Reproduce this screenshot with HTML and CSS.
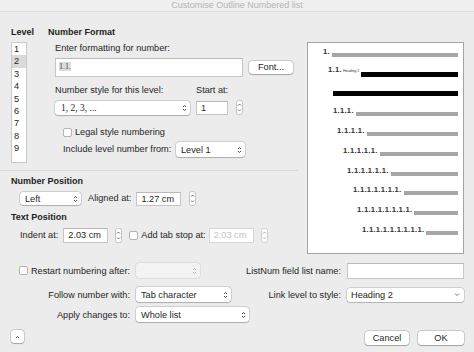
FILE: index.html
```html
<!DOCTYPE html>
<html lang="en">
<head>
    <meta charset="UTF-8">
    <meta name="viewport" content="width=device-width, initial-scale=1.0">
    <title>Customise Outline Numbered list</title>
    <link rel="stylesheet" href="styles.css">
</head>
<body>
    <div class="titlebar">Customise Outline Numbered list</div>

    <div class="top">
        <div class="setup">
            <div class="format-area">
                <div class="levels">
                    <div class="section-title">Level</div>
                    <div class="level-list">
                        <div class="level">1</div>
                        <div class="level selected">2</div>
                        <div class="level">3</div>
                        <div class="level">4</div>
                        <div class="level">5</div>
                        <div class="level">6</div>
                        <div class="level">7</div>
                        <div class="level">8</div>
                        <div class="level">9</div>
                    </div>
                </div>

                <div class="format">
                    <div class="section-title">Number Format</div>
                    <div class="indent">
                        <div class="label first">Enter formatting for number:</div>
                        <div class="row field-row">
                            <div class="field format-field"><span class="code">1.1.</span></div>
                            <div class="button font-btn">Font...</div>
                        </div>
                        <div class="row label-row">
                            <div class="label style-label">Number style for this level:</div>
                            <div class="label">Start at:</div>
                        </div>
                        <div class="row control-row">
                            <div class="popup style-popup"><span class="serif">1, 2, 3, ...</span>
                                <svg class="chev" width="5" height="8" viewBox="0 0 5 8"><path d="M1 3 2.5 1.5 4 3M1 5 2.5 6.5 4 5" fill="none" stroke="#333" stroke-width="0.9"/></svg>
                            </div>
                            <div class="field start-field">1</div>
                            <svg class="stepper" width="7" height="15" viewBox="0 0 7 15"><rect x="0.5" y="0.5" width="6" height="14" rx="2" fill="#fff" stroke="#c4c4c4"/><path d="M2 5.5 3.5 4 5 5.5M2 9.5 3.5 11 5 9.5" fill="none" stroke="#555" stroke-width="0.8"/></svg>
                        </div>
                        <div class="row check-row"><span class="checkbox"></span>Legal style numbering</div>
                        <div class="row include-row">
                            <div class="label include-label">Include level number from:</div>
                            <div class="popup include-popup">Level 1
                                <svg class="chev" width="5" height="8" viewBox="0 0 5 8"><path d="M1 3 2.5 1.5 4 3M1 5 2.5 6.5 4 5" fill="none" stroke="#333" stroke-width="0.9"/></svg>
                            </div>
                        </div>
                    </div>
                </div>
            </div>

            <div class="positions">
                <div class="section-title">Number Position</div>
                <div class="row pos-row">
                    <div class="popup align-popup">Left
                        <svg class="chev" width="5" height="8" viewBox="0 0 5 8"><path d="M1 3 2.5 1.5 4 3M1 5 2.5 6.5 4 5" fill="none" stroke="#333" stroke-width="0.9"/></svg>
                    </div>
                    <div class="label aligned-label">Aligned at:</div>
                    <div class="field cm-field">1.27 cm</div>
                    <svg class="stepper" width="7" height="15" viewBox="0 0 7 15"><rect x="0.5" y="0.5" width="6" height="14" rx="2" fill="#fff" stroke="#c4c4c4"/><path d="M2 5.5 3.5 4 5 5.5M2 9.5 3.5 11 5 9.5" fill="none" stroke="#555" stroke-width="0.8"/></svg>
                </div>

                <div class="section-title text-title">Text Position</div>
                <div class="row pos-row indent-row">
                    <div class="label">Indent at:</div>
                    <div class="field cm-field indent-field">2.03 cm</div>
                    <svg class="stepper" width="7" height="15" viewBox="0 0 7 15"><rect x="0.5" y="0.5" width="6" height="14" rx="2" fill="#fff" stroke="#c4c4c4"/><path d="M2 5.5 3.5 4 5 5.5M2 9.5 3.5 11 5 9.5" fill="none" stroke="#555" stroke-width="0.8"/></svg>
                    <span class="checkbox tab-check"></span>
                    <div class="label">Add tab stop at:</div>
                    <div class="field cm-field tab-field disabled">2.03 cm</div>
                    <svg class="stepper" width="7" height="15" viewBox="0 0 7 15"><rect x="0.5" y="0.5" width="6" height="14" rx="2" fill="#fff" stroke="#d0d0d0"/><path d="M2 5.5 3.5 4 5 5.5M2 9.5 3.5 11 5 9.5" fill="none" stroke="#999" stroke-width="0.8"/></svg>
                </div>
            </div>
        </div>

        <div class="preview">
            <div class="pv-row lv1"><span class="num">1.</span><span class="bar"></span></div>
            <div class="pv-row lv2"><span class="num">1.1.<span class="tiny">Heading 2</span></span><span class="bar dark"></span></div>
            <div class="pv-row lv3"><span class="bar dark"></span></div>
            <div class="pv-row lv4"><span class="num">1.1.1.</span><span class="bar"></span></div>
            <div class="pv-row lv5"><span class="num">1.1.1.1.</span><span class="bar"></span></div>
            <div class="pv-row lv6"><span class="num">1.1.1.1.1.</span><span class="bar"></span></div>
            <div class="pv-row lv7"><span class="num">1.1.1.1.1.1.</span><span class="bar"></span></div>
            <div class="pv-row lv8"><span class="num">1.1.1.1.1.1.1.</span><span class="bar"></span></div>
            <div class="pv-row lv9"><span class="num">1.1.1.1.1.1.1.1.</span><span class="bar"></span></div>
            <div class="pv-row lv10"><span class="num">1.1.1.1.1.1.1.1.1.</span><span class="bar"></span></div>
        </div>
    </div>

    <div class="options">
        <div class="opt-cell opt-label"><span class="checkbox"></span>Restart numbering after:</div>
        <div class="opt-cell">
            <div class="popup restart-popup disabled">
                <svg class="chev" width="5" height="8" viewBox="0 0 5 8"><path d="M1 3 2.5 1.5 4 3M1 5 2.5 6.5 4 5" fill="none" stroke="#aaa" stroke-width="0.9"/></svg>
            </div>
        </div>
        <div class="opt-cell opt-label">ListNum field list name:</div>
        <div class="opt-cell"><div class="field listnum-field"></div></div>

        <div class="opt-cell opt-label">Follow number with:</div>
        <div class="opt-cell">
            <div class="popup follow-popup">Tab character
                <svg class="chev" width="5" height="8" viewBox="0 0 5 8"><path d="M1 3 2.5 1.5 4 3M1 5 2.5 6.5 4 5" fill="none" stroke="#333" stroke-width="0.9"/></svg>
            </div>
        </div>
        <div class="opt-cell opt-label">Link level to style:</div>
        <div class="opt-cell">
            <div class="combo">Heading 2
                <svg class="chev" width="6" height="5" viewBox="0 0 6 5"><path d="M1 1.5 3 3.5 5 1.5" fill="none" stroke="#666" stroke-width="0.9"/></svg>
            </div>
        </div>

        <div class="opt-cell opt-label">Apply changes to:</div>
        <div class="opt-cell">
            <div class="popup apply-popup">Whole list
                <svg class="chev" width="5" height="8" viewBox="0 0 5 8"><path d="M1 3 2.5 1.5 4 3M1 5 2.5 6.5 4 5" fill="none" stroke="#333" stroke-width="0.9"/></svg>
            </div>
        </div>
    </div>

    <div class="footer">
        <div class="button disclose">
            <svg width="5" height="4" viewBox="0 0 5 4"><path d="M1 3 2.5 1.5 4 3" fill="none" stroke="#444" stroke-width="0.9"/></svg>
        </div>
        <div class="button cancel">Cancel</div>
        <div class="button ok">OK</div>
    </div>
</body>
</html>
```

FILE: styles.css
```css
body {
    margin: 0;
    width: 474px;
    height: 352px;
    overflow: hidden;
    background-color: #ececec;
    font-family: "Liberation Sans", Arial, sans-serif;
    font-size: 9.2px;
    color: #262626;
}

.titlebar {
    height: 11px;
    line-height: 10px;
    text-align: center;
    font-size: 9px;
    color: #b4b4b4;
    background-color: #f0f0f0;
    border-bottom: 1px solid #dedede;
}

.top {
    display: flex;
}

.setup {
    width: 298px;
}

.format-area {
    display: flex;
    height: 158px;
    padding-left: 11px;
    border-bottom: 1px solid #d9d9d9;
}

.section-title {
    font-weight: bold;
    font-size: 9px;
    line-height: 11px;
    color: #1e1e1e;
    white-space: nowrap;
}

.levels {
    width: 16px;
    padding-top: 14.5px;
}

.level-list {
    box-sizing: border-box;
    height: 121px;
    margin-top: 4.5px;
    background: #fff;
    border: 1px solid #c9c9c9;
}

.level {
    height: 12.4px;
    line-height: 12.4px;
    padding-left: 2px;
}

.level.selected {
    background: #dadada;
}

.format {
    margin-left: 21px;
    padding-top: 14.5px;
}

.indent {
    padding-left: 7px;
}

.label {
    line-height: 11px;
    white-space: nowrap;
}

.first {
    margin-top: 5px;
}

.row {
    display: flex;
    align-items: center;
}

.field {
    box-sizing: border-box;
    background: #fff;
    border: 1px solid #c6c6c6;
    border-top-color: #b9b9b9;
    padding-left: 4px;
    white-space: nowrap;
}

.field.disabled {
    color: #c2c2c2;
    border-color: #d6d6d6;
}

.popup {
    box-sizing: border-box;
    display: flex;
    align-items: center;
    background: #fff;
    border-radius: 3px;
    box-shadow: 0 0 0 0.5px rgba(0, 0, 0, 0.22), 0 0.5px 1px rgba(0, 0, 0, 0.18);
    padding-left: 5px;
    white-space: nowrap;
}

.popup.disabled {
    background: #f3f3f3;
    box-shadow: 0 0 0 0.5px rgba(0, 0, 0, 0.12);
}

.popup .chev {
    margin-left: auto;
    margin-right: 3px;
}

.button {
    box-sizing: border-box;
    background: #fff;
    border-radius: 3px;
    box-shadow: 0 0 0 0.5px rgba(0, 0, 0, 0.25), 0 0.5px 1px rgba(0, 0, 0, 0.2);
    text-align: center;
}

.checkbox {
    box-sizing: border-box;
    display: inline-block;
    width: 9px;
    height: 9px;
    margin-right: 3px;
    background: #fff;
    border: 1px solid #b3b3b3;
    border-radius: 2px;
    flex: none;
}

.field-row {
    margin-top: 4.5px;
}

.format-field {
    width: 188px;
    height: 19px;
    padding: 2px 3px;
}

.code {
    font-family: "Liberation Serif", serif;
    font-size: 8px;
    line-height: 8px;
    background: #dcdcdc;
    color: #444;
}

.font-btn {
    width: 44px;
    height: 13px;
    line-height: 13px;
    margin-left: 6px;
}

.label-row {
    margin-top: 7.5px;
}

.style-label {
    width: 141px;
}

.control-row {
    margin-top: 4.5px;
}

.style-popup {
    width: 135px;
    height: 14px;
    padding-left: 6px;
}

.serif {
    font-family: "Liberation Serif", serif;
    font-size: 9.5px;
}

.start-field {
    width: 32px;
    height: 14px;
    line-height: 12px;
    margin-left: 6px;
}

.stepper {
    margin-left: 8px;
    flex: none;
}

.check-row {
    margin-top: 11.5px;
    padding-left: 8px;
    height: 11px;
}

.include-row {
    margin-top: 4.5px;
    padding-left: 8px;
    height: 15px;
}

.include-label {
    width: 113px;
}

.include-popup {
    width: 69px;
    height: 15px;
}

.positions {
    padding: 4.5px 0 0 11px;
}

.pos-row {
    margin-top: 4.5px;
    padding-left: 9px;
    height: 15px;
}

.align-popup {
    width: 61px;
    height: 13px;
}

.aligned-label {
    margin: 0 5px 0 7px;
}

.cm-field {
    width: 45px;
    height: 14px;
    line-height: 12px;
}

.text-title {
    margin-top: 5.5px;
}

.indent-row {
    margin-top: 5.5px;
}

.indent-field {
    height: 15px;
    line-height: 13px;
    margin-left: 5px;
}

.indent-row .stepper {
    margin-left: 7px;
}

.tab-check {
    margin-left: 7px;
}

.tab-field {
    height: 15px;
    line-height: 13px;
    margin-left: 3px;
}

.preview {
    box-sizing: border-box;
    width: 157px;
    height: 212px;
    margin: 30px 0 0 9px;
    padding: 2px 5px 0 0;
    background: #fff;
    border: 1px solid #a4a4a4;
}

.pv-row {
    box-sizing: border-box;
    display: flex;
    align-items: flex-end;
    height: 19.8px;
    padding-bottom: 8px;
}

.num {
    font-weight: bold;
    font-size: 7.6px;
    line-height: 7px;
    letter-spacing: 0.3px;
    margin: 0 2px 2px 0;
    color: #333;
    white-space: nowrap;
}

.tiny {
    font-weight: normal;
    font-size: 3.6px;
    letter-spacing: 0;
    margin-left: 1px;
}

.bar {
    flex: 1;
    height: 4px;
    background: #a6a6a6;
}

.bar.dark {
    height: 5px;
    background: #000;
}

.lv1 { padding-left: 15px; }
.lv2 { padding-left: 20px; }
.lv3 { padding-left: 25px; }
.lv4 { padding-left: 25px; }
.lv5 { padding-left: 29px; }
.lv6 { padding-left: 35px; }
.lv7 { padding-left: 39px; }
.lv8 { padding-left: 45px; }
.lv9 { padding-left: 49px; }
.lv10 { padding-left: 54px; }

.options {
    display: grid;
    grid-template-columns: 130px 114px 85px 117px;
    grid-template-rows: 24px 20px 16px;
    column-gap: 6px;
    margin-top: 9px;
}

.opt-cell {
    display: flex;
    align-items: center;
    height: 15px;
    white-space: nowrap;
}

.opt-label {
    justify-content: flex-end;
}

.restart-popup {
    width: 64px;
    height: 15px;
}

.listnum-field {
    width: 117px;
    height: 16px;
}

.follow-popup {
    width: 95px;
    height: 15px;
}

.combo {
    box-sizing: border-box;
    display: flex;
    align-items: center;
    width: 117px;
    height: 14px;
    padding-left: 4px;
    background: #fff;
    border-radius: 3px;
    box-shadow: 0 0 0 0.5px rgba(0, 0, 0, 0.22), 0 0.5px 1px rgba(0, 0, 0, 0.15);
}

.combo .chev {
    margin-left: auto;
    margin-right: 4px;
}

.apply-popup {
    width: 113px;
    height: 15px;
}

.footer {
    display: flex;
    align-items: flex-start;
    margin-top: 7px;
    padding: 0 10px 0 11px;
}

.disclose {
    display: flex;
    align-items: center;
    justify-content: center;
    width: 13px;
    height: 13px;
}

.cancel {
    width: 44px;
    height: 14px;
    line-height: 14px;
    margin: 1px 0 0 auto;
}

.ok {
    width: 46px;
    height: 14px;
    line-height: 14px;
    margin: 1px 0 0 9px;
}
```
